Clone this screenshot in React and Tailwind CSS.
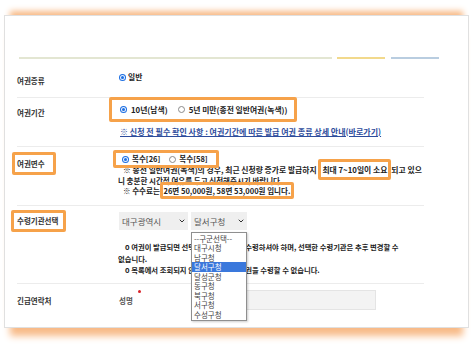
import React from "react";
import { ChevronDown } from "lucide-react";

/* ---------- small radio dot ---------- */
const Radio = ({ checked, className = "" }) =>
  checked ? (
    <span className={`flex h-[7px] w-[7px] shrink-0 items-center justify-center rounded-full bg-[#1d6fe3] ${className}`}>
      <span className="flex h-[5px] w-[5px] items-center justify-center rounded-full bg-[#e9f1fd]">
        <span className="h-[3px] w-[3px] rounded-full bg-[#1d6fe3]" />
      </span>
    </span>
  ) : (
    <span className={`block h-[7px] w-[7px] shrink-0 rounded-full border border-[#8a8a8a] bg-white ${className}`} />
  );

const districts = [
  "--구군선택--",
  "대구시청",
  "남구청",
  "달서구청",
  "달성군청",
  "동구청",
  "북구청",
  "서구청",
  "수성구청",
];

export default function App() {
  return (
    <div className="h-[347px] w-[474px] overflow-hidden bg-white pl-[4px] pt-[15px] font-['Noto_Sans_CJK_KR',sans-serif] text-[#222]">
      <div className="h-[313px] w-[465px] border border-[#e0e0e0] bg-white pl-[12px] shadow-[0_-10px_6px_-6px_#f8bb88,0_14px_7px_-6px_#f8bb88]">
        <div className="h-[41px]" />

        {/* -------- step lines -------- */}
        <div className="ml-[2px] flex h-[2px]">
          <div className="w-[313px] bg-[#e3e6d2]" />
          <div className="ml-[5px] w-[48px] bg-[#f2d98c]" />
          <div className="ml-[6px] w-[48px] bg-[#b9cde0]" />
        </div>

        <div className="w-[407px] text-[7.5px] font-bold">
          {/* 여권종류 */}
          <div className="flex h-[38px]">
            <div className="w-[101px] pt-[17px] leading-[10px] text-[#333]">여권종류</div>
            <div className="ml-[1px] mt-[13px] flex h-[10px] items-center gap-[2px] text-[7.8px] leading-[10px]">
              <Radio checked />
              <span>일반</span>
            </div>
          </div>

          {/* 여권기간 */}
          <div className="flex h-[49px] border-t border-[#ececec]">
            <div className="w-[101px] pt-[10px] leading-[10px] text-[#333]">여권기간</div>
            <div>
              <div className="-ml-[9px] -mt-[1px] inline-flex h-[25px] items-center rounded-[2px] border-[3px] border-[#f6a24a] pl-[8px] pr-[7px] text-[7.8px] leading-[10px]">
                <Radio checked />
                <span className="ml-[4px]">10년(남색)</span>
                <Radio className="ml-[10px]" />
                <span className="ml-[4px]">5년 미만(종전 일반여권(녹색))</span>
              </div>
              <div className="ml-[2px] mt-[5px] whitespace-nowrap text-[8px] leading-[10px] text-[#2d4c9c] underline">
                ※ 신청 전 필수 확인 사항 : 여권기간에 따른 발급 여권 종류 상세 안내(바로가기)
              </div>
            </div>
          </div>

          {/* 여권면수 */}
          <div className="flex h-[59px] border-t border-[#ececec]">
            <div className="w-[101px]">
              <div className="-ml-[5px] mt-[5px] inline-flex h-[23px] items-center rounded-[2px] border-[3px] border-[#f6a24a] pl-[2px] pr-[8px] leading-[10px] text-[#333]">
                여권면수
              </div>
            </div>
            <div>
              <div className="relative z-10 -ml-[5px] mt-[3px] inline-flex h-[18px] items-center rounded-[2px] border-[3px] border-[#f6a24a] pl-[6px] pr-[8px] leading-[10px]">
                <Radio checked />
                <span className="ml-[3px]">복수[26]</span>
                <Radio className="ml-[9px]" />
                <span className="ml-[3px]">복수[58]</span>
              </div>
              <div className="-mt-[3px] whitespace-nowrap text-[7.5px] leading-[10.5px]">
                <div className="pl-[5px] text-[7.8px]">
                  ※ 종전 일반여권(녹색)의 경우, 최근 신청량 증가로 발급하지{" "}
                  <span className="rounded-[2px] border-[3px] border-[#f6a24a] px-[1px] py-[2px]">
                    최대 7~10일이 소요
                  </span>
                  되고 있으
                </div>
                <div>니 충분한 시간적 여유를 두고 신청해주시기 바랍니다.</div>
                <div className="pl-[5px]">
                  ※ 수수료는{" "}
                  <span className="-ml-[2px] rounded-[2px] border-[3px] border-[#f6a24a] px-[1px]">
                    26면 50,000원, 58면 53,000원 입니다.
                  </span>
                </div>
              </div>
            </div>
          </div>

          {/* 수령기관선택 */}
          <div className="flex h-[78px] border-t border-[#ececec]">
            <div className="w-[101px]">
              <div className="-ml-[6px] mt-[4px] inline-flex h-[22px] items-center rounded-[2px] border-[3px] border-[#f6a24a] pl-[3px] pr-[5px] leading-[10px] text-[#333]">
                수령기관선택
              </div>
            </div>
            <div>
              <div className="ml-[1px] mt-[6px] flex h-[18px] gap-[3px] text-[8.5px] font-normal text-[#555]">
                <div className="flex w-[69px] items-center justify-between bg-[#efefef] pl-[3px] pr-[2px]">
                  <span>대구광역시</span>
                  <ChevronDown size={8} strokeWidth={3} className="text-[#333]" />
                </div>
                <div className="relative flex w-[56px] items-center justify-between bg-[#efefef] pl-[3px] pr-[2px]">
                  <span>달서구청</span>
                  <ChevronDown size={8} strokeWidth={3} className="text-[#333]" />
                  <div className="absolute left-0 top-[20px] z-20 w-[56px] border border-[#8f8f8f] bg-white py-[0.5px] shadow-[1px_1px_2px_rgba(0,0,0,0.2)]">
                    {districts.map((d) => (
                      <div
                        key={d}
                        className={
                          d === "달서구청"
                            ? "h-[9.5px] bg-[#3a78dc] pl-[2px] text-[7.5px] leading-[9.5px] text-white"
                            : "h-[9.5px] pl-[2px] text-[7.5px] leading-[9.5px] text-[#444]"
                        }
                      >
                        {d}
                      </div>
                    ))}
                  </div>
                </div>
              </div>
              <div className="mt-[12px] whitespace-nowrap text-[7.3px] leading-[11.5px]">
                <div className="pl-[7px]">
                  o 여권이 발급되면 선택한 수령기관에서 수령하셔야 하며, 선택한 수령기관은 추후 변경할 수
                </div>
                <div>없습니다.</div>
                <div className="pl-[7px]">o 목록에서 조회되지 않는 기관에서는 여권을 수령할 수 없습니다.</div>
              </div>
            </div>
          </div>

          {/* 긴급연락처 */}
          <div className="flex border-t border-[#ececec]">
            <div className="w-[101px] pt-[12px] leading-[10px] text-[#333]">긴급연락처</div>
            <div className="flex">
              <div className="flex w-[82px] items-start pl-[1px]">
                <span className="pt-[12px] leading-[10px] text-[#555]">성명</span>
                <span className="ml-[5px] mt-[6px] h-[3px] w-[3px] rounded-full bg-[#d8232a]" />
              </div>
              <div className="mt-[6px] h-[20px] w-[176px] border border-[#e4e4e4] bg-[#f3f3f3]" />
            </div>
          </div>
        </div>
      </div>
    </div>
  );
}
